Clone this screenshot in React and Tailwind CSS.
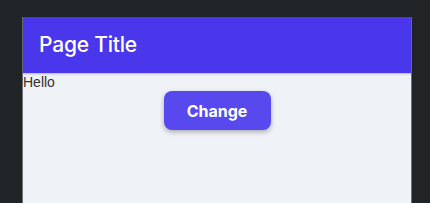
import React, { useState } from 'react';

const App = () => {
  const [label, setLabel] = useState('Hello');

  return (
    <div className="h-screen bg-[#202427] pt-[17px] pl-[22px] overflow-hidden">
      <div className="w-[390px] h-full bg-[#eff2f7] border-x border-[#6b7075] flex flex-col">
        <header className="h-[56px] shrink-0 bg-[#4a37eb] flex items-center px-4 shadow-[0_1px_2px_rgba(0,0,0,0.25)] z-10">
          <h1 className="text-white text-[21px] font-medium font-['Inter',sans-serif] tracking-[-0.01em]">Page Title</h1>
        </header>
        <div className="text-[14px] leading-[18px] text-[#333] font-['Liberation_Sans',sans-serif]">{label}</div>
        <div className="flex justify-center">
          <button
            onClick={() => setLabel(label === 'Hello' ? 'World' : 'Hello')}
            className="w-[107px] h-[39px] rounded-lg bg-[#5849ef] text-white text-[16px] font-bold font-['Inter',sans-serif] shadow-[0_2px_5px_rgba(0,0,0,0.3)]"
          >
            Change
          </button>
        </div>
      </div>
    </div>
  );
};

export default App;
